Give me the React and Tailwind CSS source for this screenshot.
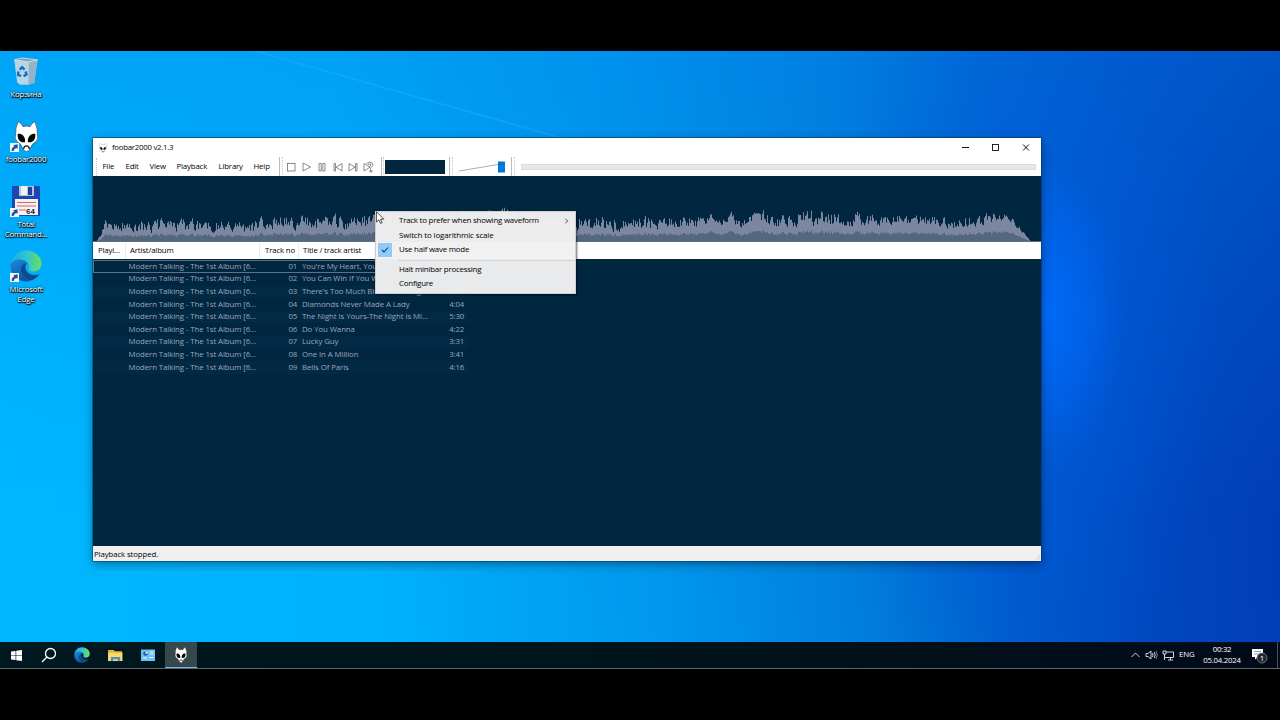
import React from 'react';

const TRACKS = [
  { no: '01', title: "You're My Heart, You", time: '' },
  { no: '02', title: 'You Can Win If You W', time: '' },
  { no: '03', title: "There's Too Much Blue In Missing...", time: '4:11' },
  { no: '04', title: 'Diamonds Never Made A Lady', time: '4:04' },
  { no: '05', title: 'The Night Is Yours-The Night Is Mi...', time: '5:30' },
  { no: '06', title: 'Do You Wanna', time: '4:22' },
  { no: '07', title: 'Lucky Guy', time: '3:31' },
  { no: '08', title: 'One In A Million', time: '3:41' },
  { no: '09', title: 'Bells Of Paris', time: '4:16' },
];

// [x, average height, jitter] control points of the track envelope
const POINTS = [
  [0, 0, 0], [2, 0, 0], [7, 6, 2], [12, 16, 6], [60, 16, 9], [110, 17, 8], [160, 14, 8], [170, 19, 9],
  [280, 20, 10], [380, 22, 10], [395, 27, 12], [420, 23, 11], [500, 18, 10], [600, 19, 9], [610, 19, 6], [618, 26, 4],
  [628, 17, 4], [635, 27, 7], [648, 17, 6], [660, 23, 7], [672, 26, 9], [680, 18, 7], [690, 21, 8], [715, 24, 11],
  [740, 24, 11], [770, 22, 9], [800, 22, 7], [840, 21, 7], [860, 18, 7], [885, 22, 9], [912, 25, 5],
  [922, 19, 4], [930, 9, 2], [937, 1, 0], [940, 0, 0],
];

function levelAt(x) {
  for (let i = 1; i < POINTS.length; i++) {
    const a = POINTS[i - 1], b = POINTS[i];
    if (x <= b[0]) {
      const t = (x - a[0]) / (b[0] - a[0]);
      return [a[1] + (b[1] - a[1]) * t, a[2] + (b[2] - a[2]) * t];
    }
  }
  return [0, 0];
}

function buildWave() {
  let seed = 77;
  const rnd = () => (seed = (seed * 16807) % 2147483647) / 2147483647;
  let peak = 'M0 64', rms = 'M0 64';
  let prev = 0.5;
  for (let x = 0; x < 941; x++) {
    const [h, j] = levelAt(x);
    const v = prev * 0.35 + rnd() * 0.65;
    prev = v;
    const p = Math.max(0, h + j * (v * 2 - 1));
    const q = Math.max(0, h * 0.4 + (v - 0.5) * j * 0.5);
    peak += `V${(64 - p).toFixed(1)}H${x + 1}`;
    rms += `V${(64 - q).toFixed(1)}H${x + 1}`;
  }
  return { peak: peak + 'V64Z', rms: rms + 'V64Z' };
}
const WAVE = buildWave();

function Alien({ className }) {
  return (
    <svg viewBox="0 0 26 30" className={className}>
      <path d="M5 .5Q8 2 9.500 5.500Q13 4.300 16.500 5.500Q18 2 21 .5Q24 7 23.500 13Q25 17 22 20Q18 22 17 26Q15.500 29.500 13 29.500Q10.500 29.500 9 26Q8 22 4 20Q1 17 2.500 13Q2 7 5 .5Z" fill="#fff" stroke="#222" strokeWidth=".5" />
      <path d="M4.500 12.500C9 11.500 12.500 16 11.500 20.500C7 21.500 4 18 4.500 12.500ZM21.500 12.500C17 11.500 13.500 16 14.500 20.500C19 21.500 22 18 21.500 12.500Z" fill="#050505" />
      <path d="M10.200 27Q10.500 24 13 24Q15.500 24 15.800 27" fill="none" stroke="#111" strokeWidth="1.300" />
    </svg>
  );
}

function EdgeLogo({ className, id }) {
  return (
    <svg viewBox="0 0 32 32" className={className}>
      <defs>
        <linearGradient id={id + 'a'} x1="0" y1="0.3" x2="1" y2="0.3">
          <stop offset="0" stopColor="#1ca7e8" />
          <stop offset=".5" stopColor="#2fc4d4" />
          <stop offset="1" stopColor="#6be05a" />
        </linearGradient>
        <linearGradient id={id + 'b'} x1="0" y1="0" x2=".6" y2="1">
          <stop offset="0" stopColor="#1b8ede" />
          <stop offset="1" stopColor="#0c50a4" />
        </linearGradient>
      </defs>
      <path d="M.5 15C1.500 6 8 .5 16 .5C25 .5 31.500 7 31.500 13.500C31.500 18.500 28 21.500 23.500 21.500C19.500 21.500 18 20 18.500 18.500C20.500 15 18 10.500 12 10C6 9.500 2 12 .5 15Z" fill={`url(#${id}a)`} />
      <path d="M.5 15C2 11 6.500 9 11 9.700C14 10.200 16 11.500 17 13C12.500 13.500 10.500 17 11 21C12 27 17.500 31 21 30.700C11 34 0 27 .5 15Z" fill={`url(#${id}b)`} />
      <path d="M15 13.500C11 15 10 19 11.500 23C13.500 28.500 19 31.500 22.500 30C26 28.500 28.500 26 29.500 24C24 26.500 18 24.500 16 20C15 17.500 15.300 15 17 13Z" fill="#114a8b" />
    </svg>
  );
}

function Shortcut() {
  return (
    <svg viewBox="0 0 10 10" className="absolute bottom-0 left-0 size-[9px]">
      <rect width="10" height="10" fill="#f4f6f8" />
      <path d="M2 9Q1.500 5 5 4L3.500 2.500L8.500 1.500V6.500L7 5.500Q4.500 6 4 9Z" fill="#1d4fa0" />
    </svg>
  );
}

function RecycleBin() {
  return (
    <svg viewBox="0 0 26 30" className="h-[29px] w-[26px]">
      <path d="M1 3L9 1L25 3L21.500 27L7 29L4 26Z" fill="#a9cbe0" />
      <path d="M1 3L16 5L16 29L7 28L4 26Z" fill="#b7d5e6" />
      <path d="M16 5L25 3L21.500 27L15.500 29Z" fill="#93b3c6" />
      <path d="M1 3L9 1L25 3L16 5Z" fill="#7fa0b2" stroke="#d6e7ef" strokeWidth=".8" />
      <path d="M6.500 13L9 10.500L11.500 13M5 15L4.800 18.500L8 19.500M12.500 15L13.500 18L10.500 20" fill="none" stroke="#0f6fc6" strokeWidth="2.500" />
    </svg>
  );
}

function Floppy() {
  return (
    <svg viewBox="0 0 30 30" className="size-[30px]">
      <path d="M1 0H29V30H3L1 28Z" fill="#1c46b4" />
      <rect x="8" y="0" width="15" height="10" fill="#b9c4d2" />
      <rect x="10" y="0" width="6" height="9" fill="#eff3f6" />
      <rect x="17" y="1" width="4" height="8" fill="#1c3f9c" />
      <rect x="4" y="13" width="23" height="16" fill="#f6f0f0" />
      <path d="M6 16.500H25M6 20H25M6 24H15" stroke="#c9686d" strokeWidth="1" />
      <text x="15" y="28" fontSize="7.500" fontWeight="700" fontFamily="Liberation Mono, monospace" fill="#222">64</text>
    </svg>
  );
}

function DesktopIcon({ label, shortcut, children }) {
  return (
    <div className="flex w-[52px] flex-col items-center">
      <div className="relative flex h-[32px] w-[32px] items-center justify-center">
        {children}
        {shortcut && <Shortcut />}
      </div>
      <div className="mt-[2px] whitespace-pre text-center text-[7.8px] leading-[10px] tracking-[-0.18px] text-white [text-shadow:0_1px_1px_#000,0_0_2px_#000,1px_1px_1px_#000]">{label}</div>
    </div>
  );
}

function Grip() {
  return <div className="h-[18px] w-[2px] shrink-0 border-l border-dotted border-[#c4c4c4]" />;
}

function Divider() {
  return <div className="h-[19px] w-px shrink-0 bg-[#bdbdbd]" />;
}

function Toolbar() {
  return (
    <div className="flex h-[19px] shrink-0 items-center bg-white pl-[3px]">
      <Grip />
      <div className="flex w-[181px] shrink-0 items-center pl-[4.500px] pt-px">
        <span className="w-[23px]">File</span>
        <span className="w-[24px]">Edit</span>
        <span className="w-[27px]">View</span>
        <span className="w-[42px]">Playback</span>
        <span className="w-[35px]">Library</span>
        <span>Help</span>
      </div>
      <div className="flex w-[5px] shrink-0 justify-between"><Divider /><Grip /></div>
      <svg viewBox="0 0 97 14" className="h-[14px] w-[97px] shrink-0" fill="none" stroke="#6d6d6d" strokeWidth=".8">
        <rect x="3.500" y="3.500" width="7.500" height="7.500" />
        <path d="M19 3L26.500 7L19 11Z" />
        <path d="M35 3.500H37.200V11H35ZM38.800 3.500H41V11H38.800Z" />
        <path d="M50 3.500H51.500V11H50ZM58 3.500V11L52 7.200Z" />
        <path d="M65 3.500V11L71 7.200ZM71.500 3.500H73V11H71.500Z" />
        <path d="M80 3.500V11L86 7.200ZM82.500 3.500Q86 1 88.500 3Q90 6 86.500 8V9.500M86 10.500H88V12H86ZM84 4.500Q87 3 87 5Q86 6.500 85 7" />
      </svg>
      <div className="flex w-[5px] shrink-0 justify-between pr-px"><Divider /><Grip /></div>
      <div className="-ml-px h-[14px] w-[60px] shrink-0 bg-[#002640]" />
      <div className="ml-[4px] flex w-[5px] shrink-0 justify-between"><Divider /><Grip /></div>
      <svg viewBox="0 0 57 14" className="h-[14px] w-[57px] shrink-0">
        <path d="M5 11L44 4.500" stroke="#8a8a8a" strokeWidth=".7" />
        <rect x="44" y="1.500" width="7" height="11" fill="#0078d7" />
      </svg>
      <div className="flex w-[5px] shrink-0 justify-between"><Divider /><Grip /></div>
      <div className="ml-[5px] mr-[5px] h-[6px] flex-1 border border-[#dcdcdc] bg-[#e7e7e7]" />
    </div>
  );
}

function ContextMenu() {
  return (
    <div className="absolute left-[375px] top-[160px] h-[83px] w-[201px] border border-[#cfcfcf] bg-[#f1f1f1]/97 pt-[2px] text-[7.9px] tracking-[-0.22px] text-black shadow-[1px_1px_2px_rgba(0,0,0,0.6)]">
      <div className="flex h-[14px] items-center pl-[23px]">
        <span className="flex-1">Track to prefer when showing waveform</span>
        <svg viewBox="0 0 6 8" className="mr-[6px] h-[6px] w-[5px]"><path d="M1.500 1L4.500 4L1.500 7" fill="none" stroke="#222" /></svg>
      </div>
      <div className="flex h-[15px] items-center pl-[23px] tracking-[-0.1px]">Switch to logarithmic scale</div>
      <div className="flex h-[14px] items-center">
        <div className="ml-[2px] mr-[7px] flex size-[14px] items-center justify-center bg-[#91c9f7]">
          <svg viewBox="0 0 10 10" className="size-[10px]"><path d="M2 5L4 7L8 2.500" fill="none" stroke="#123a66" strokeWidth="1.100" /></svg>
        </div>
        Use half wave mode
      </div>
      <div className="mb-px ml-[22px] mt-[3px] h-px bg-[#d4d4d4]" />
      <div className="flex h-[15px] items-center pl-[23px]">Halt minibar processing</div>
      <div className="flex h-[14px] items-center pl-[23px]">Configure</div>
    </div>
  );
}

function PlayerWindow() {
  return (
    <div className="absolute left-[93px] top-[87px] flex h-[423px] w-[948px] flex-col bg-[#002640] text-[7.8px] tracking-[-0.15px] text-black shadow-[0_0_0_1px_rgba(0,50,100,0.5),0_3px_10px_rgba(0,0,0,0.4)]">
      <div className="flex h-[19px] shrink-0 items-center bg-white pl-[5px]">
        <Alien className="h-[10px] w-[10px]" />
        <span className="ml-[4px] flex-1 tracking-[-0.25px]">foobar2000 v2.1.3</span>
        <svg viewBox="0 0 84 10" className="-mt-px mr-[6px] h-[10px] w-[84px]" fill="none" stroke="#111">
          <path d="M11 5.500H18" />
          <rect x="41.500" y="2.500" width="6" height="6" strokeWidth=".9" />
          <path d="M72 2.500L78 8.500M78 2.500L72 8.500" />
        </svg>
      </div>
      <Toolbar />
      <svg viewBox="0 0 948 65" className="h-[66px] w-[948px] shrink-0" preserveAspectRatio="none">
        <g transform="translate(0 1)">
          <path d={WAVE.peak} fill="#7b86a0" />
          <path d={WAVE.rms} fill="#53677e" />
          <path d="M0 63.500H948" stroke="#5f6f80" />
        </g>
      </svg>
      <div className="flex h-[17px] shrink-0 items-center bg-white">
        <div className="w-[33px] border-r border-[#ececec] pl-[5px] leading-[17px]">Playi...</div>
        <div className="w-[134px] border-r border-[#ececec] pl-[4px] leading-[17px]">Artist/album</div>
        <div className="w-[39px] whitespace-nowrap border-r border-[#ececec] pr-[3px] text-right leading-[17px]">Track no</div>
        <div className="pl-[4px] leading-[17px]">Title / track artist</div>
      </div>
      <div className="w-[375px] flex-1 pt-[1.400px] text-[#9ba6ba]">
        {TRACKS.map((t, i) => (
          <div
            key={t.no}
            className={'flex h-[12.6px] items-center whitespace-nowrap ' + (i === 0 ? 'outline outline-1 -outline-offset-1 outline-[#5c7385]' : i % 2 === 0 ? 'bg-[#032a44]' : '')}
          >
            <div className="w-[167px] pl-[35.5px] tracking-[-0.08px]">Modern Talking - The 1st Album [6...</div>
            <div className="w-[37px] text-right">{t.no}</div>
            <div className="w-[135px] overflow-hidden pl-[5px] tracking-[-0.07px]">{t.title}</div>
            <div className="w-[32px] text-right">{t.time}</div>
          </div>
        ))}
      </div>
      <div className="flex h-[15px] shrink-0 items-center justify-between bg-[#f0f0f0] pl-px">
        <span className="pt-[2px] tracking-[-0.1px]">Playback stopped.</span>
        <svg viewBox="0 0 8 8" className="size-[7px] self-end"><path d="M7 1L1 7M7 4L4 7" stroke="#aaa" strokeDasharray="1 1" /></svg>
      </div>
    </div>
  );
}

function Taskbar() {
  return (
    <div className="absolute inset-x-0 bottom-0 flex h-[27px] items-center border-b border-[#5b666b] bg-linear-to-r from-[#00181f] via-[#00141c] to-[#020a1a] text-[7.8px] tracking-[-0.15px] text-white">
      <div className="flex w-[33px] justify-center">
        <svg viewBox="0 0 12 12" className="size-[11px]" fill="#fff"><path d="M0 1.700L5 1V5.600H0ZM5.700.9L12 0V5.600H5.700ZM0 6.300H5V11L0 10.300ZM5.700 6.300H12V12L5.700 11.100Z" /></svg>
      </div>
      <div className="flex w-[32px] justify-center">
        <svg viewBox="0 0 16 16" className="size-[16px]" fill="none" stroke="#fff" strokeWidth="1.300"><circle cx="9.500" cy="6.500" r="5" /><path d="M6 10L1 15" /></svg>
      </div>
      <div className="flex w-[34px] justify-center"><EdgeLogo className="size-[16px]" id="tb" /></div>
      <div className="flex w-[32px] justify-center">
        <svg viewBox="0 0 16 14" className="h-[13px] w-[15px]">
          <path d="M0 1H6L7.500 2.500H15V13H0Z" fill="#e8b339" />
          <path d="M0 4H15.500V13H0Z" fill="#fbd96c" />
          <path d="M3 13V8.500H13V13H10.500V11H5.500V13Z" fill="#4a93c9" />
        </svg>
      </div>
      <div className="flex w-[34px] justify-center">
        <svg viewBox="0 0 14 12" className="h-[12px] w-[14px]">
          <rect width="14" height="11.500" y=".5" fill="#6cc3f0" />
          <circle cx="4.500" cy="4.500" r="2.300" fill="#1b62a8" />
          <path d="M4.500 4.500V2.200A2.300 2.300 0 0 1 6.800 4.500Z" fill="#fff" />
          <path d="M9 3H12.500M9 5H12.500M2 9H6M8.500 8.500H12.500" stroke="#e8f7ff" />
        </svg>
      </div>
      <div className="flex h-full w-[32px] items-center justify-center border-b border-[#76b9ed] bg-[#37474e]">
        <Alien className="h-[16px] w-[14px]" />
      </div>
      <div className="flex-1" />
      <svg viewBox="0 0 44 14" className="mr-[5px] h-[14px] w-[44px]" fill="none" stroke="#e6e6e6" strokeWidth=".9">
        <path d="M1.500 9L5.500 5L9.500 9" />
        <path d="M16 5.500H18L21 3V11L18 8.500H16ZM22.500 5Q23.500 7 22.500 9M24.300 4Q26 7 24.300 10" />
        <path d="M26 3Q28.500 7 26 11" strokeOpacity=".6" />
        <path d="M36 4H43.500V9.500H35M38 12H43M40.500 9.500V12M33 3H36V6H33ZM34.500 6V12" />
      </svg>
      <span className="w-[20px]">ENG</span>
      <div className="w-[46px] text-center leading-[11.500px] tracking-[-0.25px]">00:32<br />05.04.2024</div>
      <svg viewBox="0 0 18 18" className="ml-[6px] mr-[8px] h-[18px] w-[18px]">
        <path d="M1 3H12V11H7L4 13.500V11H1Z" fill="#fff" />
        <path d="M3 5.500H10M3 8H10" stroke="#777" strokeWidth=".7" />
        <circle cx="11" cy="12" r="5" fill="#20272f" stroke="#7d858c" strokeWidth=".8" />
        <text x="11" y="15" textAnchor="middle" fontSize="8" fill="#fff">1</text>
      </svg>
      <div className="h-full w-[3px] border-l border-[#4a525a]" />
    </div>
  );
}

export default function App() {
  return (
    <div className="h-[720px] w-[1280px] overflow-hidden bg-black pt-[51px] font-['Open_Sans','Noto_Sans',sans-serif]">
      <div className="relative h-[618px] overflow-hidden bg-[radial-gradient(ellipse_80px_150px_at_1045px_263px,rgba(0,108,255,0.9),rgba(0,96,240,0)),radial-gradient(ellipse_200px_360px_at_1020px_290px,rgba(0,92,225,0.6),rgba(0,86,215,0)),linear-gradient(180deg,rgba(0,130,235,0.35)_0%,rgba(0,130,235,0)_75%),linear-gradient(86deg,#00b8ff_0%,#00b2fd_28%,#0098ee_50%,#007ddc_66%,#0058ca_78%,#0047c0_88%,#003bb4_100%)]">
        <svg viewBox="0 0 1280 591" className="absolute left-0 top-0 h-[591px] w-[1280px]">
          <path d="M255 0L565 88" stroke="#35b4fa" strokeWidth="1.500" opacity=".35" />
        </svg>
        <div className="flex w-[52px] flex-col gap-[21px] pt-[4px]">
          <DesktopIcon label="Корзина"><RecycleBin /></DesktopIcon>
          <DesktopIcon label="foobar2000" shortcut><Alien className="h-[31px] w-[27px]" /></DesktopIcon>
          <DesktopIcon label={'Total\nCommand...'} shortcut><Floppy /></DesktopIcon>
          <div className="-mt-[10px]">
            <DesktopIcon label={'Microsoft\nEdge'} shortcut><EdgeLogo className="size-[32px]" id="dk" /></DesktopIcon>
          </div>
        </div>
        <PlayerWindow />
        <ContextMenu />
        <svg viewBox="0 0 10 15" className="absolute left-[376px] top-[160px] h-[14px] w-[9px]">
          <path d="M.5.5V12L3.200 9.500L5 13.500L6.800 12.700L5 8.800H8.700Z" fill="#fff" stroke="#111" strokeWidth=".8" />
        </svg>
        <Taskbar />
      </div>
    </div>
  );
}
